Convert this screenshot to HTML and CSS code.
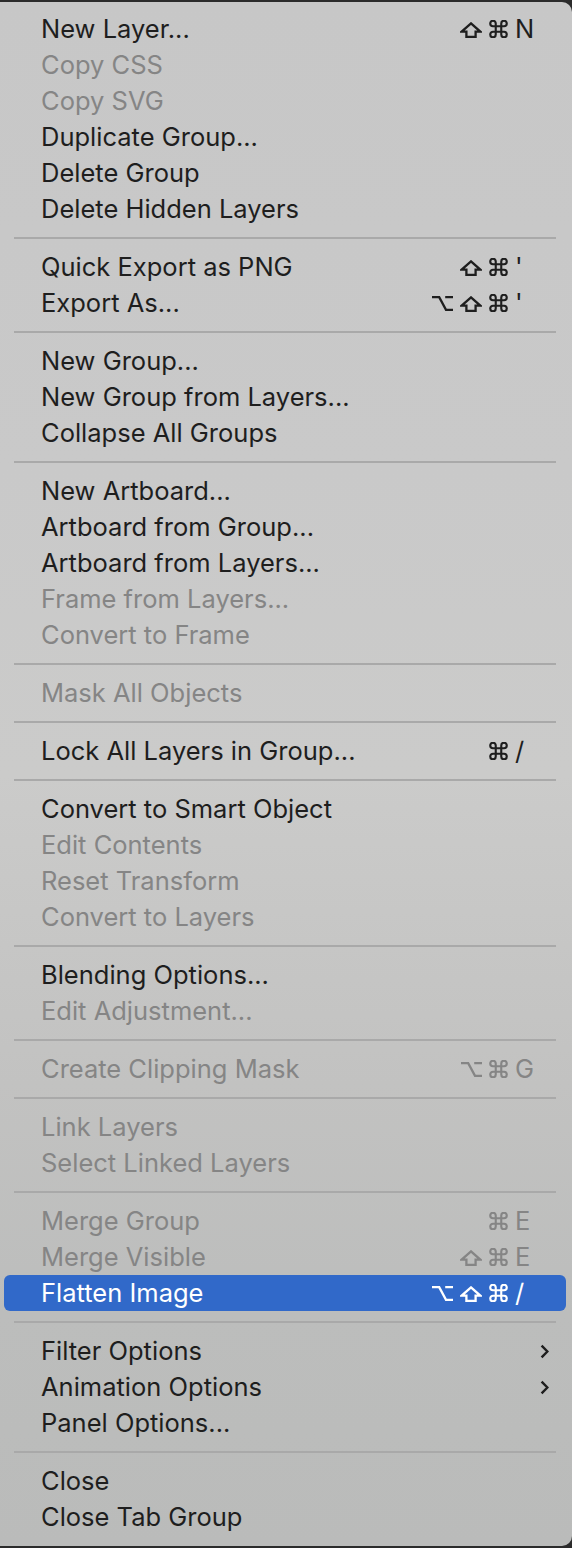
FILE: index.html
```html
<!DOCTYPE html>
<html>
<head>
<meta charset="utf-8">
<link rel="stylesheet" href="styles.css">
</head>
<body>
<svg class="defs" width="0" height="0" aria-hidden="true">
  <symbol id="shift" viewBox="0 0 22 16"><path d="M11 1.4 L20.3 9.6 H15.6 V15 H6.4 V9.6 H1.7 Z"/></symbol>
  <symbol id="cmd" viewBox="2.2 2.2 19.6 19.6"><path d="M15 6v12a3 3 0 1 0 3-3H6a3 3 0 1 0 3 3V6a3 3 0 1 0-3 3h12a3 3 0 1 0-3-3"/></symbol>
  <symbol id="opt" viewBox="0 0 21 17"><path d="M0 2.2 H7.2 L14 14.8 H21 M13.2 2.2 H21"/></symbol>
  <symbol id="chev" viewBox="0 0 9 15"><path d="M1.6 1.6 L7.4 7.5 L1.6 13.4"/></symbol>
</svg>
<div class="menu">
  <div class="item"><span class="label">New Layer...</span><span class="keys"><svg class="i-shift"><use href="#shift"/></svg><svg class="i-cmd"><use href="#cmd"/></svg><span class="k">N</span></span></div>
  <div class="item dis"><span class="label">Copy CSS</span></div>
  <div class="item dis"><span class="label">Copy SVG</span></div>
  <div class="item"><span class="label">Duplicate Group...</span></div>
  <div class="item"><span class="label">Delete Group</span></div>
  <div class="item"><span class="label">Delete Hidden Layers</span></div>
  <div class="sep"></div>
  <div class="item"><span class="label">Quick Export as PNG</span><span class="keys"><svg class="i-shift"><use href="#shift"/></svg><svg class="i-cmd"><use href="#cmd"/></svg><span class="k">'</span></span></div>
  <div class="item"><span class="label">Export As...</span><span class="keys"><svg class="i-opt"><use href="#opt"/></svg><svg class="i-shift"><use href="#shift"/></svg><svg class="i-cmd"><use href="#cmd"/></svg><span class="k">'</span></span></div>
  <div class="sep"></div>
  <div class="item"><span class="label">New Group...</span></div>
  <div class="item"><span class="label">New Group from Layers...</span></div>
  <div class="item"><span class="label">Collapse All Groups</span></div>
  <div class="sep"></div>
  <div class="item"><span class="label">New Artboard...</span></div>
  <div class="item"><span class="label">Artboard from Group...</span></div>
  <div class="item"><span class="label">Artboard from Layers...</span></div>
  <div class="item dis"><span class="label">Frame from Layers...</span></div>
  <div class="item dis"><span class="label">Convert to Frame</span></div>
  <div class="sep"></div>
  <div class="item dis"><span class="label">Mask All Objects</span></div>
  <div class="sep"></div>
  <div class="item"><span class="label">Lock All Layers in Group...</span><span class="keys"><svg class="i-cmd"><use href="#cmd"/></svg><span class="k">/</span></span></div>
  <div class="sep"></div>
  <div class="item"><span class="label">Convert to Smart Object</span></div>
  <div class="item dis"><span class="label">Edit Contents</span></div>
  <div class="item dis"><span class="label">Reset Transform</span></div>
  <div class="item dis"><span class="label">Convert to Layers</span></div>
  <div class="sep"></div>
  <div class="item"><span class="label">Blending Options...</span></div>
  <div class="item dis"><span class="label">Edit Adjustment...</span></div>
  <div class="sep"></div>
  <div class="item dis"><span class="label">Create Clipping Mask</span><span class="keys"><svg class="i-opt"><use href="#opt"/></svg><svg class="i-cmd"><use href="#cmd"/></svg><span class="k">G</span></span></div>
  <div class="sep"></div>
  <div class="item dis"><span class="label">Link Layers</span></div>
  <div class="item dis"><span class="label">Select Linked Layers</span></div>
  <div class="sep"></div>
  <div class="item dis"><span class="label">Merge Group</span><span class="keys"><svg class="i-cmd"><use href="#cmd"/></svg><span class="k">E</span></span></div>
  <div class="item dis"><span class="label">Merge Visible</span><span class="keys"><svg class="i-shift"><use href="#shift"/></svg><svg class="i-cmd"><use href="#cmd"/></svg><span class="k">E</span></span></div>
  <div class="item hl"><span class="label">Flatten Image</span><span class="keys"><svg class="i-opt"><use href="#opt"/></svg><svg class="i-shift"><use href="#shift"/></svg><svg class="i-cmd"><use href="#cmd"/></svg><span class="k">/</span></span></div>
  <div class="sep"></div>
  <div class="item"><span class="label">Filter Options</span><svg class="i-chev"><use href="#chev"/></svg></div>
  <div class="item"><span class="label">Animation Options</span><svg class="i-chev"><use href="#chev"/></svg></div>
  <div class="item"><span class="label">Panel Options...</span></div>
  <div class="sep"></div>
  <div class="item"><span class="label">Close</span></div>
  <div class="item"><span class="label">Close Tab Group</span></div>
</div>
</body>
</html>
```
FILE: styles.css
```css
html, body {
  margin: 0;
  padding: 0;
  background: #2b2b2b;
}
body {
  width: 572px;
  height: 1548px;
  padding-top: 2px;
  box-sizing: border-box;
  font-family: Inter, "Noto Sans", "Liberation Sans", sans-serif;
  font-size: 25.5px;
  color: #1e1e1e;
}
.defs {
  position: absolute;
  width: 0;
  height: 0;
  overflow: hidden;
}
.menu {
  height: 1544px;
  box-sizing: border-box;
  padding: 9px 6px 11px 4px;
  border-radius: 0 10px 10px 0;
  background: linear-gradient(180deg, #c7c7c7 0%, #c9c9c9 30%, #cbcbca 50%, #c2c2c1 70%, #bcbdbc 85%, #babbba 100%);
}
.item {
  height: 36px;
  display: flex;
  align-items: center;
  padding: 0 17px 0 37px;
  border-radius: 6px;
  white-space: nowrap;
}
.label {
  flex: 1;
  line-height: 36px;
}
.dis {
  color: #858585;
}
.hl {
  background: #3169c9;
  color: #ffffff;
}
.keys {
  display: flex;
  align-items: center;
  gap: 7px;
  padding-right: 14px;
}
.keys svg, .i-chev {
  fill: none;
  stroke: currentColor;
  stroke-width: 2.3;
  stroke-linejoin: miter;
}
.i-shift { width: 22px; height: 16px; margin-top: 2px; }
.i-cmd { width: 19px; height: 18px; stroke-width: 2.1; }
.i-opt { width: 21px; height: 17px; }
.k {
  width: 20px;
  line-height: 36px;
}
.i-chev {
  width: 9px;
  height: 15px;
  stroke-width: 2.4;
}
.sep {
  height: 2px;
  margin: 10px 10px 10px 10px;
  background: #a9a9a9;
}
```
